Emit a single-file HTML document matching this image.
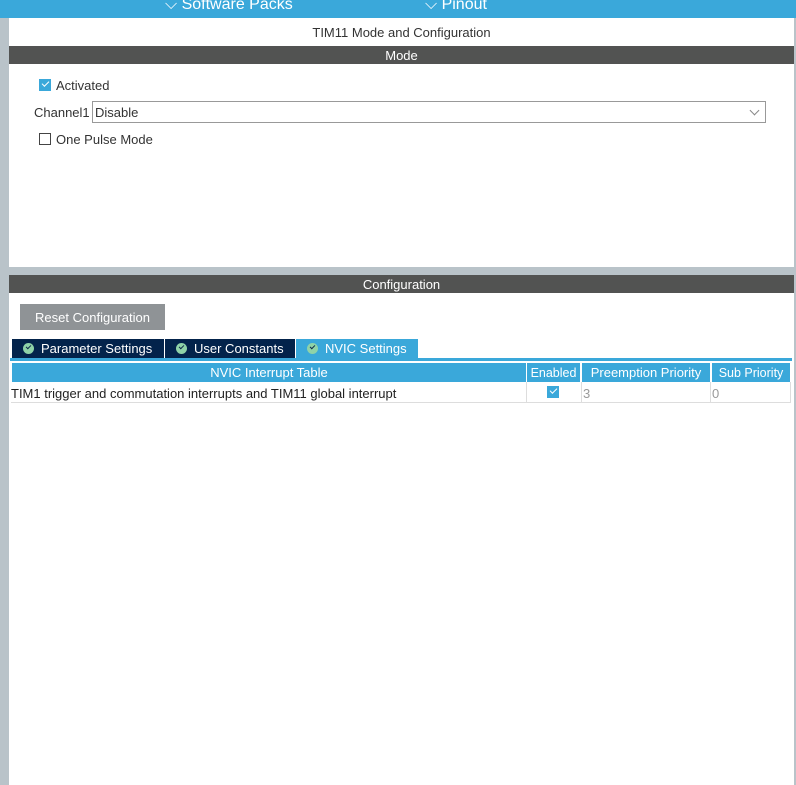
<!DOCTYPE html><html><head><style>
body{margin:0;width:796px;height:785px;position:relative;overflow:hidden;background:#fff;font-family:"Liberation Sans",sans-serif;font-size:13px;color:#333}
div{position:absolute;box-sizing:border-box}
.hd{background:#525352;color:#fff;text-align:center;font-size:13px;line-height:19px}
.th{background:#3aa8da;color:#fff;text-align:center;line-height:20px;top:363px;height:19px;font-size:13px}
.tab{top:339px;height:19px;color:#fff;line-height:20px;font-size:13px;padding-left:29px}
.ok{position:absolute;left:11px;top:4px;width:11px;height:11px;border-radius:50%;background:#8fd3a8}
.ok:after{content:"";position:absolute;left:3px;top:2px;width:4px;height:2px;border-left:1.5px solid #0d2a4a;border-bottom:1.5px solid #0d2a4a;transform:rotate(-45deg)}
</style></head><body>
<div style="left:0;top:0;width:796px;height:18px;background:#3aa8da;color:#fff;font-size:16px;line-height:10px">
<span style="position:absolute;left:165px;top:0px">⌵ Software Packs</span><span style="position:absolute;left:425px;top:0px">⌵ Pinout</span></div>
<div style="left:0;top:18px;width:9px;height:767px;background:#b9c3c9"></div>
<div style="left:794px;top:18px;width:2px;height:767px;background:#b9c3c9"></div>
<div style="left:9px;top:267px;width:785px;height:8px;background:#b9c3c9"></div>
<div style="left:9px;top:25px;width:785px;text-align:center">TIM11 Mode and Configuration</div>
<div class="hd" style="left:9px;top:46px;width:785px;height:18px">Mode</div>
<div style="left:39px;top:79px;width:12px;height:12px;background:#3aa8da"></div>
<div style="left:42px;top:81px;width:7px;height:4px;border-left:1.5px solid #fff;border-bottom:1.5px solid #fff;transform:rotate(-45deg)"></div>
<div style="left:56px;top:78px">Activated</div>
<div style="left:34px;top:105px">Channel1</div>
<div style="left:92px;top:101px;width:674px;height:22px;border:1px solid #999;padding:3px 0 0 2px">Disable</div>
<div style="left:751px;top:107px;width:7px;height:7px;border-right:1px solid #888;border-bottom:1px solid #888;transform:rotate(45deg)"></div>
<div style="left:39px;top:133px;width:12px;height:12px;border:1px solid #444"></div>
<div style="left:56px;top:132px">One Pulse Mode</div>
<div class="hd" style="left:9px;top:275px;width:785px;height:18px">Configuration</div>
<div style="left:20px;top:304px;width:145px;height:26px;background:#8f9396;color:#fff;text-align:center;line-height:27px">Reset Configuration</div>
<div class="tab" style="left:12px;width:152px;background:#03234b"><span class="ok"></span>Parameter Settings</div>
<div class="tab" style="left:165px;width:130px;background:#03234b"><span class="ok"></span>User Constants</div>
<div class="tab" style="left:296px;width:122px;background:#3aa8da"><span class="ok"></span>NVIC Settings</div>
<div style="left:10px;top:358px;width:782px;height:3px;background:#3aa8da"></div>
<div class="th" style="left:12px;width:514px">NVIC Interrupt Table</div>
<div class="th" style="left:527px;width:53px;font-size:12.5px">Enabled</div>
<div class="th" style="left:582px;width:128px">Preemption Priority</div>
<div class="th" style="left:712px;width:78px;font-size:12.5px">Sub Priority</div>
<div style="left:11px;top:382px;width:780px;height:21px;border-bottom:1px solid #ddd;border-right:1px solid #ddd"></div>
<div style="left:526px;top:382px;width:1px;height:21px;background:#ddd"></div>
<div style="left:581px;top:382px;width:1px;height:21px;background:#ddd"></div>
<div style="left:710px;top:382px;width:1px;height:21px;background:#ddd"></div>
<div style="left:11px;top:386px;color:#222">TIM1 trigger and commutation interrupts and TIM11 global interrupt</div>
<div style="left:547px;top:386px;width:12px;height:12px;background:#3aa8da"></div>
<div style="left:550px;top:388px;width:7px;height:4px;border-left:1.5px solid #fff;border-bottom:1.5px solid #fff;transform:rotate(-45deg)"></div>
<div style="left:583px;top:386px;color:#999">3</div>
<div style="left:712px;top:386px;color:#999">0</div>
</body></html>
